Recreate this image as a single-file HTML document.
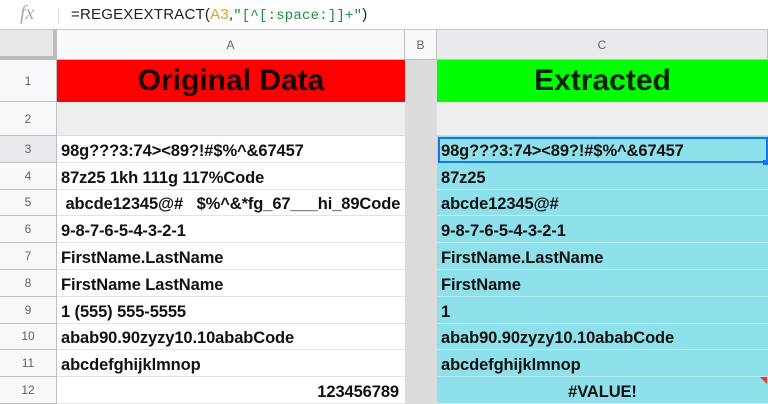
<!DOCTYPE html>
<html><head><style>
*{margin:0;padding:0;box-sizing:border-box}
body{width:768px;height:404px;overflow:hidden;background:#fff;font-family:"Liberation Sans",Arial,sans-serif;position:relative}
.a{position:absolute}
.fb{left:0;top:0;width:768px;height:30px;background:#fff;border-bottom:1px solid #c8c8c8}
.hdr{background:#f8f9fa;color:#5f6368;font-size:12px;display:flex;align-items:center;justify-content:center;border-right:1px solid #c0c0c0;border-bottom:1px solid #c0c0c0}
.cell{font-weight:bold;font-size:16.5px;letter-spacing:-0.1px;color:#111;display:flex;align-items:center;padding-left:4px;padding-top:5px;border-bottom:1px solid #e2e2e2;white-space:pre}
</style></head><body>
<div class="a fb"></div>
<div class="a" style="left:20px;top:2px;font-family:'Liberation Serif',serif;font-style:italic;font-size:20px;color:#aaa">fx</div>
<div class="a" style="left:58px;top:8px;width:1px;height:16px;background:#ddd"></div>
<div class="a" style="left:71px;top:6px;font-size:15px;color:#222;letter-spacing:0.2px">=REGEXEXTRACT(<span style="color:#e0a020">A3</span>,<span style="color:#1e8a3c;font-family:'Liberation Mono',monospace;font-size:14px">"[^[:space:]]+"</span>)</div>
<div class="a hdr" style="left:0;top:30px;width:57px;height:30px;background:#e8e8e8;border-right:4px solid #bbb;border-bottom:4px solid #bbb"></div>
<div class="a hdr" style="left:57px;top:30px;width:348px;height:30px">A</div>
<div class="a hdr" style="left:405px;top:30px;width:32px;height:30px">B</div>
<div class="a hdr" style="left:437px;top:30px;width:331px;height:30px;background:#e8eaed">C</div>
<div class="a" style="left:405px;top:60px;width:32px;height:344px;background:#dcdcdc"></div>
<div class="a" style="left:57px;top:60px;width:348px;height:42px;background:#ff0000;display:flex;align-items:center;justify-content:center;font-weight:bold;font-size:30px;color:#1a0000">Original Data</div>
<div class="a" style="left:437px;top:60px;width:331px;height:42px;background:#00ff00;display:flex;align-items:center;justify-content:center;font-weight:bold;font-size:30px;color:#002000">Extracted</div>
<div class="a" style="left:57px;top:102px;width:348px;height:34px;background:#eeeeee;border-bottom:1px solid #ddd"></div>
<div class="a" style="left:437px;top:102px;width:331px;height:34px;background:#eeeeee;border-bottom:1px solid #ddd"></div>
<div id="rows"></div>
<script>
var A=["98g???3:74><89?!#$%^&67457","87z25 1kh 111g 117%Code"," abcde12345@#   $%^&*fg_67___hi_89Code","9-8-7-6-5-4-3-2-1","FirstName.LastName","FirstName LastName","1 (555) 555-5555","abab90.90zyzy10.10ababCode","abcdefghijklmnop",""];
var C=["98g???3:74><89?!#$%^&67457","87z25","abcde12345@#","9-8-7-6-5-4-3-2-1","FirstName.LastName","FirstName","1","abab90.90zyzy10.10ababCode","abcdefghijklmnop",""];
var h='';
h+='<div class="a hdr" style="left:0;top:60px;width:57px;height:42px">1</div>';
h+='<div class="a hdr" style="left:0;top:102px;width:57px;height:34px">2</div>';
for(var i=0;i<10;i++){var t=136+i*26.8;
h+='<div class="a hdr" style="left:0;top:'+t+'px;width:57px;height:26.8px;'+(i==0?'background:#e8eaed':'')+'">'+(i+3)+'</div>';
h+='<div class="a cell" style="left:57px;top:'+t+'px;width:348px;height:26.8px;overflow:hidden">'+A[i].replace(/&/g,'&amp;').replace(/</g,'&lt;')+'</div>';
h+='<div class="a cell" style="left:437px;top:'+t+'px;width:331px;height:26.8px;background:#8ee0eb;border-bottom:1px solid #b8eef4">'+C[i].replace(/&/g,'&amp;').replace(/</g,'&lt;')+'</div>';}
h+='<div class="a cell" style="left:57px;top:377px;width:348px;height:27px;justify-content:flex-end;padding-right:6px">123456789</div>';
h+='<div class="a cell" style="left:437px;top:377px;width:331px;height:27px;justify-content:center;padding-left:0;background:#8ee0eb">#VALUE!</div>';
h+='<div class="a" style="left:438px;top:137px;width:330px;height:26px;border:2px solid #1a73e8"></div>';
h+='<div class="a" style="left:763px;top:160px;width:5px;height:5px;background:#1a73e8"></div>';
h+='<div class="a" style="left:760px;top:377px;width:0;height:0;border-left:7px solid transparent;border-top:7px solid #e53935"></div>';
document.getElementById('rows').innerHTML=h;
</script>
</body></html>
